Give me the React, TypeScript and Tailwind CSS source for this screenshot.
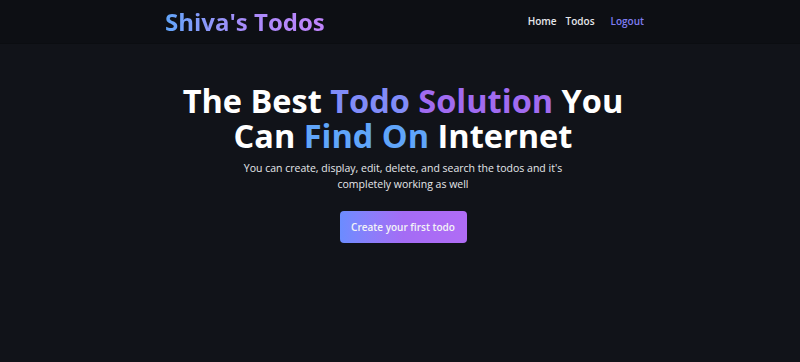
import React from "react";

const App = () => {
  return (
    <div
      className="min-h-[362px] bg-[#111319] text-white"
      style={{ fontFamily: '"Open Sans", "Noto Sans", sans-serif' }}
    >
      <header className="bg-[#0d0f14] h-[44px] border-b border-[#0b0d11]">
        <div className="mx-auto w-[482px] h-full flex items-center justify-between pl-[6px]">
          <h1 className="text-[24px] font-bold bg-gradient-to-r from-[#60a5fa] via-[#a78bfa] to-[#c084fc] bg-clip-text text-transparent leading-none">
            Shiva's Todos
          </h1>
          <nav className="flex items-center text-[10px] font-semibold mr-[-3px]">
            <a className="text-[#e5e7eb] mr-[9px]" href="#">Home</a>
            <a className="text-[#e5e7eb] mr-[16px]" href="#">Todos</a>
            <a className="text-[#7f7cf2]" href="#">Logout</a>
          </nav>
        </div>
      </header>

      <main className="flex flex-col items-center pt-[39px] pl-[6px]">
        <h2 className="text-[32.5px] font-bold text-center leading-[35px] w-[470px]">
          The Best <span className="text-[#818cf8]">Todo</span>{" "}
          <span className="text-[#a16bf0]">Solution</span> You Can{" "}
          <span className="text-[#60a5fa]">Find On</span> Internet
        </h2>
        <p className="mt-[7px] text-[10.5px] leading-[16px] text-center text-[#e5e7eb] w-[340px]">
          You can create, display, edit, delete, and search the todos and it's completely working as well
        </p>
        <button className="mt-[19px] w-[127px] h-[32px] rounded-[4px] bg-gradient-to-r from-[#6b8cff] via-[#a46cf5] to-[#b06cf5] text-[10px] font-semibold text-[#f3f4f6]">
          Create your first todo
        </button>
      </main>
    </div>
  );
};

export default App;
